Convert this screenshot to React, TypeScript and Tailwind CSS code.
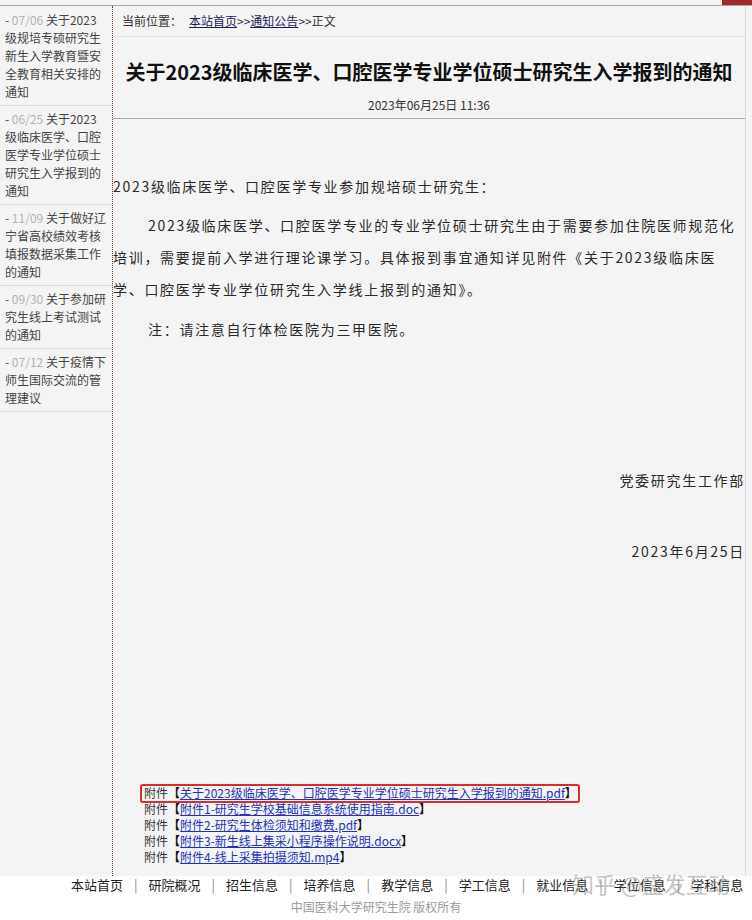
import React from "react";

const sideNews = [
  { date: "07/06", lines: ["关于2023", "级规培专硕研究生", "新生入学教育暨安", "全教育相关安排的", "通知"] },
  { date: "06/25", lines: ["关于2023", "级临床医学、口腔", "医学专业学位硕士", "研究生入学报到的", "通知"] },
  { date: "11/09", lines: ["关于做好辽", "宁省高校绩效考核", "填报数据采集工作", "的通知"] },
  { date: "09/30", lines: ["关于参加研", "究生线上考试测试", "的通知"] },
  { date: "07/12", lines: ["关于疫情下", "师生国际交流的管", "理建议"] },
];

const attachments = [
  "关于2023级临床医学、口腔医学专业学位硕士研究生入学报到的通知.pdf",
  "附件1-研究生学校基础信息系统使用指南.doc",
  "附件2-研究生体检须知和缴费.pdf",
  "附件3-新生线上集采小程序操作说明.docx",
  "附件4-线上采集拍摄须知.mp4",
];

const navLinks = ["本站首页", "研院概况", "招生信息", "培养信息", "教学信息", "学工信息", "就业信息", "学位信息", "学科信息"];

const App = () => {
  return (
    <div className="relative w-[752px] h-[920px] overflow-hidden bg-white font-['Noto_Sans_CJK_SC',sans-serif] text-[#333]">
      {/* top strip */}
      <div className="flex h-[6px] justify-end border-b border-[#a8a8a8] bg-[#f4f4f4]">
        <div className="w-[30px] bg-[#9e2a2a]"></div>
      </div>

      <div className="flex h-[870px] bg-[#f4f4f4]">
        {/* sidebar */}
        <div className="w-[113px] shrink-0 border-r border-dotted border-[#7a3b3b]">
          {sideNews.map((item, idx) => (
            <div
              key={item.date}
              className={`border-b border-[#dcdcdc] px-[5px] pb-1 text-[12px] leading-[18px] text-[#444] ${idx === 0 ? "pt-[5px]" : "pt-1"}`}
            >
              {item.lines.map((line, i) => (
                <div key={i} className="whitespace-nowrap">
                  {i === 0 && (
                    <>
                      - <span className="text-[#b3b3b3]">{item.date}</span>{" "}
                    </>
                  )}
                  {line}
                </div>
              ))}
            </div>
          ))}
        </div>

        {/* main */}
        <div className="flex w-[633px] shrink-0 flex-col border-r border-[#dadada]">
          <div className="flex h-[31px] items-center border-b border-[#e2e2e2] pl-[9px] text-[12px]">
            <span>当前位置：</span>
            <span className="ml-[7px] text-[#1c1c54] underline">本站首页</span>
            <span>&gt;&gt;</span>
            <span className="text-[#1c1c54] underline">通知公告</span>
            <span>&gt;&gt;正文</span>
          </div>

          <div className="border-b border-[#a9a9a9] pb-[5px] pt-[21px] text-center">
            <h1 className="text-[20px] font-bold leading-[28px] text-[#111]">
              关于2023级临床医学、口腔医学专业学位硕士研究生入学报到的通知
            </h1>
            <div className="mt-[11px] text-[12px] leading-[16px]">2023年06月25日 11:36</div>
          </div>

          <div className="mt-[51px] text-[14px] leading-[32px] tracking-[1.7px] text-[#2a2a2a]">
            <p className="whitespace-nowrap">2023级临床医学、口腔医学专业参加规培硕士研究生：</p>
            <p className="mt-[7px] whitespace-nowrap indent-[35px]">
              2023级临床医学、口腔医学专业的专业学位硕士研究生由于需要参加住院医师规范化
              <br />
              培训，需要提前入学进行理论课学习。具体报到事宜通知详见附件《关于2023级临床医
              <br />
              学、口腔医学专业学位研究生入学线上报到的通知》。
            </p>
            <p className="mt-[8px] indent-[35px]">注：请注意自行体检医院为三甲医院。</p>

            <p className="mt-[119px] text-right">党委研究生工作部</p>
            <p className="mt-[39px] text-right">2023年6月25日</p>
          </div>

          <div className="mt-auto pb-[11px] pl-[31px] text-[12px] leading-[16px]">
            {attachments.map((name, i) => (
              <div key={name}>
                <span className="relative inline-block">
                  附件<span className="font-bold text-[#111]">【</span>
                  <span className="text-[#2233bb] underline">{name}</span>
                  <span className="font-bold text-[#111]">】</span>
                  {i === 0 && (
                    <span className="absolute -bottom-[2px] -left-[4px] -right-[3px] -top-[1px] rounded-[3px] border-2 border-[#e02a2a]"></span>
                  )}
                </span>
              </div>
            ))}
          </div>
        </div>
      </div>

      {/* footer */}
      <div className="bg-white">
        <div className="flex pl-[71px] text-[13px] leading-[18px] text-[#222]">
          {navLinks.map((link, i) => (
            <React.Fragment key={link}>
              {i > 0 && <span className="px-[11px] text-[#888]">|</span>}
              <span className="whitespace-nowrap">{link}</span>
            </React.Fragment>
          ))}
        </div>
        <div className="mt-[5px] text-center text-[12px] leading-[16px] text-[#9a9a9a]">
          中国医科大学研究生院 版权所有
        </div>
      </div>

      {/* watermark */}
      <div className="pointer-events-none absolute left-[572px] top-[868px] whitespace-nowrap text-[22px] leading-[30px] text-[#8a8a8a] opacity-50">
        知乎 @盛发互动
      </div>
    </div>
  );
};

export default App;
